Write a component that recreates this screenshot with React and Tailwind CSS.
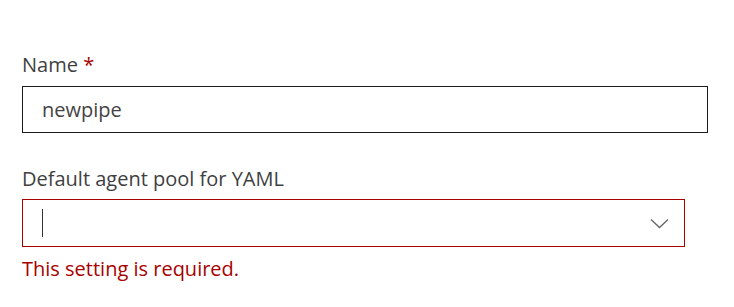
export default function App() {
  return (
    <div className="w-[734px] h-[307px] bg-white pl-[22px] pt-[51px] font-['Open_Sans',sans-serif] text-[20px] leading-[28px] text-[#3f3f3f]">
      <label className="block">
        Name <span className="text-[#a80000]">*</span>
      </label>
      <div className="mt-[7px] w-[686px] h-[47px] border border-[#1b1b1b] flex items-center pl-[19px] text-[#444]">
        newpipe
      </div>

      <label className="block mt-[32px]">Default agent pool for YAML</label>
      <div className="mt-[6px] w-[663px] h-[48px] border border-[#a80000] flex items-center justify-between pl-[19px] pr-[15px]">
        <span className="block w-px h-[28px] bg-[#333]" />
        <svg width="19" height="11" viewBox="0 0 19 11" fill="none" className="text-[#666]">
          <path d="M1 1.5 L9.5 9.5 L18 1.5" stroke="currentColor" strokeWidth="1.3" />
        </svg>
      </div>
      <p className="mt-[8px] text-[#a80000]">This setting is required.</p>
    </div>
  );
}
